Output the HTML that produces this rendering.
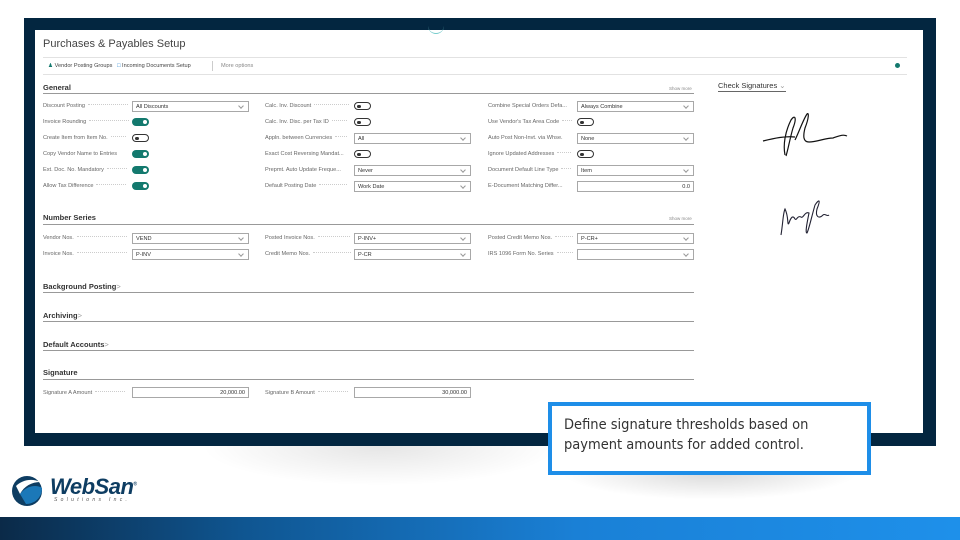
<!DOCTYPE html>
<html><head><meta charset="utf-8"><style>
*{margin:0;padding:0;box-sizing:border-box}
body{width:960px;height:540px;overflow:hidden;background:#fff;font-family:"Liberation Sans",sans-serif;position:relative}
.a{position:absolute}
.lbl{position:absolute;font-size:5.6px;color:#666;white-space:nowrap;line-height:8px}
.lbl span.d{display:inline-block;border-bottom:1px dotted #ccc;margin-left:3px;vertical-align:2px}
.fld{position:absolute;height:11px;border:1px solid #a8a8a8;background:#fff;font-size:5.6px;color:#333;padding:1px 3px;line-height:8px}
.fld.s::after{content:"";position:absolute;right:5px;top:2px;width:3px;height:3px;border-right:1px solid #999;border-bottom:1px solid #999;transform:rotate(45deg)}
.fld.n{text-align:right}
.on{position:absolute;width:17px;height:8px;border-radius:4px;background:#13796e}
.on::after{content:"";position:absolute;right:2px;top:2px;width:4px;height:4px;border-radius:2px;background:#fff}
.off{position:absolute;width:17px;height:8px;border-radius:4px;border:1px solid #333;background:#fff}
.off::after{content:"";position:absolute;left:2px;top:1.5px;width:3.5px;height:3.5px;border-radius:2px;background:#333}
.h{position:absolute;left:43px;font-size:7.5px;color:#333;font-weight:bold;white-space:nowrap}
.ln{position:absolute;left:43px;width:651px;height:1px;background:#999}
.sm{position:absolute;font-size:4.5px;color:#888}
</style></head><body>
<div class="a" style="left:24px;top:18px;width:912px;height:428px;background:#032640"></div>
<div class="a" style="left:35px;top:30px;width:888px;height:403px;background:#fff"></div>
<div class="a" style="left:428px;top:26px;width:16px;height:8px;border-bottom:1px solid #7cc;border-radius:0 0 8px 8px"></div>
<div class="a" style="left:200px;top:446px;width:360px;height:40px;background:radial-gradient(ellipse at 50% 0%,rgba(0,0,0,.10),rgba(0,0,0,0) 70%)"></div>
<div class="a" style="left:560px;top:472px;width:300px;height:28px;background:radial-gradient(ellipse at 50% 0%,rgba(0,0,0,.15),rgba(0,0,0,0) 70%)"></div>

<div class="a" style="left:43px;top:38px;font-size:11px;color:#444">Purchases &amp; Payables Setup</div>
<div class="a" style="left:43px;top:57px;width:864px;height:1px;background:#e2e2e2"></div>
<div class="a" style="left:43px;top:74px;width:864px;height:1px;background:#e2e2e2"></div>
<div class="a" style="left:48px;top:63px;font-size:5.6px;color:#444;white-space:nowrap"><span style="color:#13796e">&#9823;</span> Vendor Posting Groups &nbsp;&nbsp;<span style="color:#1a7fd0">&#9633;</span> Incoming Documents Setup</div>
<div class="a" style="left:212px;top:61px;width:1px;height:10px;background:#ccc"></div>
<div class="a" style="left:221px;top:63px;font-size:5.6px;color:#888">More options</div>
<div class="a" style="left:895px;top:63px;width:5px;height:5px;border-radius:3px;background:#13796e"></div>

<div class="h" style="top:83px">General</div><div class="sm" style="left:669px;top:86px">Show more</div>
<div class="ln" style="top:93px"></div>

<div class="lbl" style="left:43px;top:102px">Discount Posting<span class="d" style="width:40px"></span></div>
<div class="fld s" style="left:132px;top:101px;width:117px">All Discounts</div>
<div class="lbl" style="left:43px;top:118px">Invoice Rounding<span class="d" style="width:40px"></span></div><div class="on" style="left:132px;top:118px"></div>
<div class="lbl" style="left:43px;top:134px">Create Item from Item No.<span class="d" style="width:15px"></span></div><div class="off" style="left:132px;top:134px"></div>
<div class="lbl" style="left:43px;top:150px">Copy Vendor Name to Entries</div><div class="on" style="left:132px;top:150px"></div>
<div class="lbl" style="left:43px;top:166px">Ext. Doc. No. Mandatory<span class="d" style="width:20px"></span></div><div class="on" style="left:132px;top:166px"></div>
<div class="lbl" style="left:43px;top:182px">Allow Tax Difference<span class="d" style="width:30px"></span></div><div class="on" style="left:132px;top:182px"></div>
<div class="lbl" style="left:265px;top:102px">Calc. Inv. Discount<span class="d" style="width:35px"></span></div><div class="off" style="left:354px;top:102px"></div>
<div class="lbl" style="left:265px;top:118px">Calc. Inv. Disc. per Tax ID<span class="d" style="width:15px"></span></div><div class="off" style="left:354px;top:118px"></div>
<div class="lbl" style="left:265px;top:134px">Appln. between Currencies<span class="d" style="width:12px"></span></div><div class="fld s" style="left:354px;top:133px;width:117px">All</div>
<div class="lbl" style="left:265px;top:150px">Exact Cost Reversing Mandat...</div><div class="off" style="left:354px;top:150px"></div>
<div class="lbl" style="left:265px;top:166px">Prepmt. Auto Update Freque...</div><div class="fld s" style="left:354px;top:165px;width:117px">Never</div>
<div class="lbl" style="left:265px;top:182px">Default Posting Date<span class="d" style="width:28px"></span></div><div class="fld s" style="left:354px;top:181px;width:117px">Work Date</div>
<div class="lbl" style="left:488px;top:102px">Combine Special Orders Defa...</div><div class="fld s" style="left:577px;top:101px;width:117px">Always Combine</div>
<div class="lbl" style="left:488px;top:118px">Use Vendor's Tax Area Code<span class="d" style="width:10px"></span></div><div class="off" style="left:577px;top:118px"></div>
<div class="lbl" style="left:488px;top:134px">Auto Post Non-Invt. via Whse.</div><div class="fld s" style="left:577px;top:133px;width:117px">None</div>
<div class="lbl" style="left:488px;top:150px">Ignore Updated Addresses<span class="d" style="width:14px"></span></div><div class="off" style="left:577px;top:150px"></div>
<div class="lbl" style="left:488px;top:166px">Document Default Line Type<span class="d" style="width:10px"></span></div><div class="fld s" style="left:577px;top:165px;width:117px">Item</div>
<div class="lbl" style="left:488px;top:182px">E-Document Matching Differ...</div><div class="fld n" style="left:577px;top:181px;width:117px">0.0</div>

<div class="h" style="top:213px">Number Series</div><div class="sm" style="left:669px;top:216px">Show more</div>
<div class="ln" style="top:224px"></div>
<div class="lbl" style="left:43px;top:234px">Vendor Nos.<span class="d" style="width:50px"></span></div><div class="fld s" style="left:132px;top:233px;width:117px">VEND</div>
<div class="lbl" style="left:43px;top:250px">Invoice Nos.<span class="d" style="width:50px"></span></div><div class="fld s" style="left:132px;top:249px;width:117px">P-INV</div>
<div class="lbl" style="left:265px;top:234px">Posted Invoice Nos.<span class="d" style="width:32px"></span></div><div class="fld s" style="left:354px;top:233px;width:117px">P-INV+</div>
<div class="lbl" style="left:265px;top:250px">Credit Memo Nos.<span class="d" style="width:38px"></span></div><div class="fld s" style="left:354px;top:249px;width:117px">P-CR</div>
<div class="lbl" style="left:488px;top:234px">Posted Credit Memo Nos.<span class="d" style="width:18px"></span></div><div class="fld s" style="left:577px;top:233px;width:117px">P-CR+</div>
<div class="lbl" style="left:488px;top:250px">IRS 1096 Form No. Series<span class="d" style="width:16px"></span></div><div class="fld s" style="left:577px;top:249px;width:117px"></div>

<div class="h" style="top:282px">Background Posting<span style="color:#999;font-weight:normal">&gt;</span></div><div class="ln" style="top:292px"></div>
<div class="h" style="top:311px">Archiving<span style="color:#999;font-weight:normal">&gt;</span></div><div class="ln" style="top:321px"></div>
<div class="h" style="top:340px">Default Accounts<span style="color:#999;font-weight:normal">&gt;</span></div><div class="ln" style="top:350px"></div>
<div class="h" style="top:368px">Signature</div><div class="ln" style="top:379px"></div>
<div class="lbl" style="left:43px;top:389px">Signature A Amount<span class="d" style="width:30px"></span></div><div class="fld n" style="left:132px;top:387px;width:117px">20,000.00</div>
<div class="lbl" style="left:265px;top:389px">Signature B Amount<span class="d" style="width:30px"></span></div><div class="fld n" style="left:354px;top:387px;width:117px">30,000.00</div>

<div class="a" style="left:718px;top:81px;font-size:7.5px;color:#333;border-bottom:1px solid #666;padding-bottom:1px">Check Signatures <span style="color:#999">&#8964;</span></div>
<svg class="a" style="left:755px;top:110px" width="100" height="50"><path d="M8 31 C20 28 30 26 40 27 M30 45 C28 35 30 22 36 10 C40 4 42 8 38 18 C35 28 33 40 31 46 M40 30 C44 22 48 10 52 4 C54 2 54 8 50 18 C48 26 48 32 54 32 C62 32 70 28 78 28 C84 26 88 24 92 26" fill="none" stroke="#111" stroke-width="1.2"/></svg>
<svg class="a" style="left:775px;top:195px" width="60" height="50"><path d="M6 40 C8 28 8 18 10 14 C14 22 12 32 14 28 C16 22 18 20 20 24 C22 26 22 20 26 22 C28 24 30 16 34 18 C32 28 30 38 32 38 C34 34 36 24 40 10 C44 4 46 4 42 14 C40 22 44 24 48 20 C50 18 52 22 54 20" fill="none" stroke="#223" stroke-width="1.1"/></svg>

<div class="a" style="left:548px;top:402px;width:323px;height:73px;border:4px solid #1e8ee8;background:#fff"></div>
<div class="a" style="left:564px;top:415px;font-size:14.5px;line-height:20px;color:#333;font-family:'DejaVu Sans Condensed','Liberation Sans',sans-serif;white-space:nowrap">Define signature thresholds based on<br>payment amounts for added control.</div>

<svg class="a" style="left:10px;top:474px" width="36" height="34"><circle cx="17" cy="17" r="15" fill="#0e3d62"/><path d="M6 12 C12 6 22 4 30 8 C22 8 14 12 10 20Z" fill="#fff"/><path d="M10 20 C16 12 26 10 32 14 C32 24 24 30 16 30Z" fill="#1b78b8"/></svg>
<div class="a" style="left:50px;top:474px;font-size:22px;font-weight:bold;font-style:italic;color:#0e3d62;letter-spacing:-0.5px">WebSan<sup style="font-size:5px">®</sup></div>
<div class="a" style="left:54px;top:497px;font-size:5px;color:#555;letter-spacing:3.3px;font-style:italic">Solutions Inc.</div>

<div class="a" style="left:0;top:517px;width:960px;height:23px;background:linear-gradient(90deg,#0b2a48 0%,#0f5590 25%,#1a80d6 60%,#1e90ea 100%)"></div>
</body></html>
